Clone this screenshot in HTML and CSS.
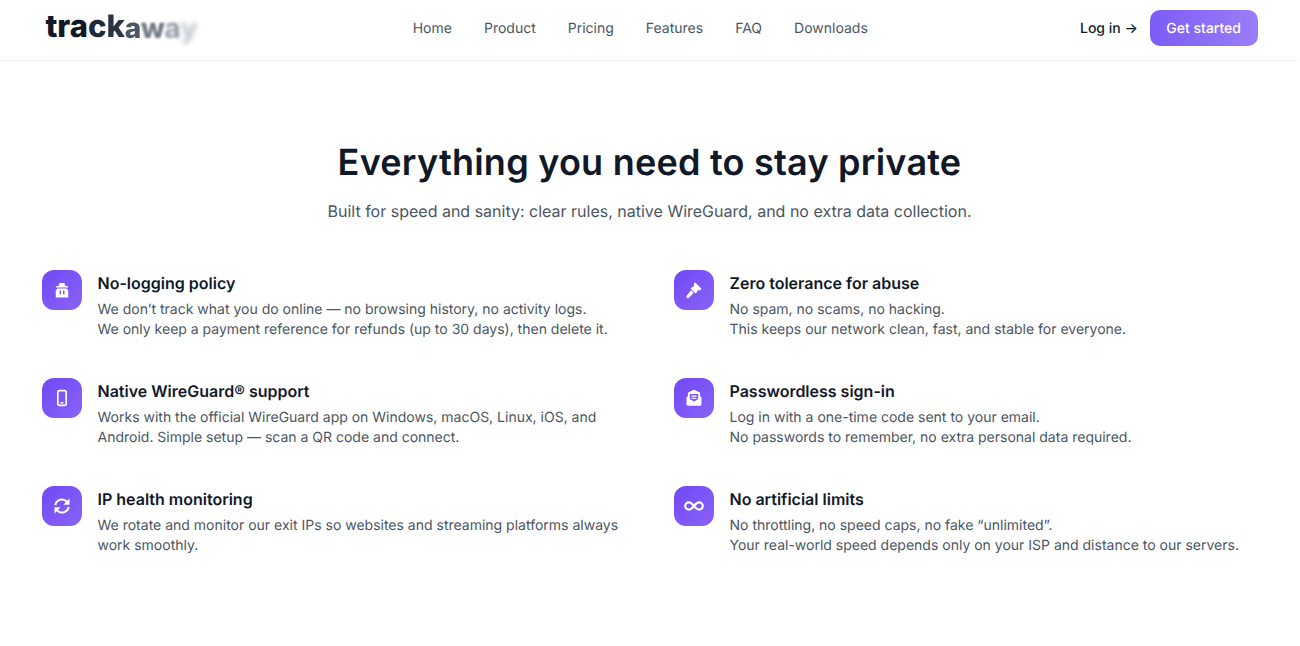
FILE: index.html
```html
<!DOCTYPE html>
<html lang="en">
<head>
<meta charset="utf-8">
<title>trackaway</title>
<link rel="stylesheet" href="styles.css">
</head>
<body>
<header class="site-header">
  <div class="header-inner">
    <a class="logo" href="#"><span class="l0">tra</span><span class="l1">c</span><span class="l2">k</span><span class="l3">a</span><span class="l4">w</span><span class="l5">a</span><span class="l6">y</span></a>
    <nav class="nav">
      <a href="#">Home</a><a href="#">Product</a><a href="#">Pricing</a><a href="#">Features</a><a href="#">FAQ</a><a href="#">Downloads</a>
    </nav>
    <div class="actions">
      <a class="login" href="#">Log in →</a>
      <a class="cta" href="#">Get started</a>
    </div>
  </div>
</header>
<main class="features">
  <h1>Everything you need to stay private</h1>
  <p class="lead">Built for speed and sanity: clear rules, native WireGuard, and no extra data collection.</p>
  <div class="grid">
    <article class="item">
      <span class="icon"><svg viewBox="0 0 24 24" width="20" height="20"><path fill="#fff" fill-rule="evenodd" d="M9 3.500h6l1 3.700h3v1.700H5V7.200h3zM6.500 10.200h11l2 2.300V21h-15v-8.500zM9 12.500v4.500h1.800v-4.500zm4.200 0v4.500H15v-4.500z"/></svg></span>
      <div><h3>No-logging policy</h3><p>We don’t track what you do online — no browsing history, no activity logs.<br>We only keep a payment reference for refunds (up to 30 days), then delete it.</p></div>
    </article>
    <article class="item">
      <span class="icon"><svg viewBox="0 0 24 24" width="20" height="20"><path fill="#fff" d="M13.200 2.800l7.800 7.800-2.200 2.200-1.100-1.100-2.200 2.200.4.400-2 2-6-6 2-2 .4.400 2.200-2.200-1.100-1.100zM8.600 12.400l3 3-5.600 5.800a1.800 1.800 0 0 1-2.600-2.600z"/></svg></span>
      <div><h3>Zero tolerance for abuse</h3><p>No spam, no scams, no hacking.<br>This keeps our network clean, fast, and stable for everyone.</p></div>
    </article>
    <article class="item">
      <span class="icon"><svg viewBox="0 0 24 24" width="20" height="20"><path fill="none" stroke="#fff" stroke-width="2" d="M8.500 3.200h7a1.500 1.500 0 0 1 1.500 1.500v14.600a1.500 1.500 0 0 1-1.500 1.500h-7A1.500 1.500 0 0 1 7 19.300V4.700a1.500 1.500 0 0 1 1.500-1.500z"/><path fill="#fff" d="M10.300 16.800h3.400v1.800h-3.400z"/></svg></span>
      <div><h3>Native WireGuard® support</h3><p>Works with the official WireGuard app on Windows, macOS, Linux, iOS, and<br>Android. Simple setup — scan a QR code and connect.</p></div>
    </article>
    <article class="item">
      <span class="icon"><svg viewBox="0 0 24 24" width="20" height="20"><path fill="#fff" fill-rule="evenodd" d="M12 2.200l6.500 3a1.500 1.500 0 0 1 .8 1.300V10l1.700 1v8.500a1.800 1.800 0 0 1-1.800 1.800H4.800A1.800 1.800 0 0 1 3 19.500V11l1.700-1V6.500a1.500 1.500 0 0 1 .8-1.300zM7 7.200v6.300l5 2.700 5-2.700V7.200zm2 1.800h6v1.500H9zm0 2.600h6V13H9z"/></svg></span>
      <div><h3>Passwordless sign-in</h3><p>Log in with a one-time code sent to your email.<br>No passwords to remember, no extra personal data required.</p></div>
    </article>
    <article class="item">
      <span class="icon"><svg viewBox="0 0 24 24" width="20" height="20" fill="none" stroke="#fff" stroke-width="2.400"><path d="M4 11a8 8 0 0 1 13.800-4.200"/><path fill="#fff" stroke="none" d="M21 3v7.500h-7.500z"/><path d="M20 13a8 8 0 0 1-13.800 4.200"/><path fill="#fff" stroke="none" d="M3 21v-7.500h7.500z"/></svg></span>
      <div><h3>IP health monitoring</h3><p>We rotate and monitor our exit IPs so websites and streaming platforms always<br>work smoothly.</p></div>
    </article>
    <article class="item">
      <span class="icon"><svg viewBox="0 0 24 24" width="24" height="24" fill="none" stroke="#fff" stroke-width="2.200"><path d="M12 12c-1.800-2.400-3.200-3.600-5.200-3.600a3.600 3.600 0 0 0 0 7.200c2 0 3.400-1.200 5.200-3.600s3.200-3.600 5.200-3.600a3.600 3.600 0 0 1 0 7.200c-2 0-3.400-1.200-5.200-3.600z"/></svg></span>
      <div><h3>No artificial limits</h3><p>No throttling, no speed caps, no fake “unlimited”.<br>Your real-world speed depends only on your ISP and distance to our servers.</p></div>
    </article>
  </div>
</main>
</body>
</html>
```

FILE: styles.css
```css
* { box-sizing: border-box; }
html, body { margin: 0; padding: 0; }
body { font-family: Inter, "Liberation Sans", sans-serif; background: #fff; color: #111827; overflow: hidden; height: 646px; padding-right: 1px; text-rendering: geometricPrecision; }
a { text-decoration: none; color: inherit; }

.site-header { height: 61px; border-bottom: 1px solid #f0f1f3; }
.header-inner { width: 1216px; margin: 0 auto; height: 56px; display: flex; justify-content: space-between; align-items: center; }
.logo { width: 159px; padding-left: 4px; font-size: 31px; font-weight: 800; color: #111827; line-height: 1; display: inline-flex; margin-top: -4px; }
.l1 { color: #1f2937; }
.l2 { color: #2b3442; filter: blur(.3px); }
.l3, .l4, .l5, .l6 { font-size: 28px; align-self: flex-end; letter-spacing: -.6px; }
.l3 { color: #4b5563; filter: blur(.7px); }
.l4 { color: #737b88; filter: blur(1.2px); }
.l5 { color: #9ca3af; filter: blur(1.8px); }
.l6 { color: #c4c8d0; filter: blur(2.4px); }
.nav { display: flex; gap: 32px; font-size: 14px; color: #4b5563; }
.actions { display: flex; align-items: center; gap: 12px; font-size: 14px; }
.login { font-weight: 500; color: #111827; }
.cta { height: 36px; padding: 0 16.5px; display: flex; align-items: center; border-radius: 10px; font-weight: 500; color: #fff; background: linear-gradient(90deg, #7c5cf6, #9a7df8); }

.features { width: 1216px; margin: 0 auto; padding-top: 75px; }
h1 { margin: 0; font-size: 36px; line-height: 52px; font-weight: 600; text-align: center; color: #111827; letter-spacing: .23px; }
.lead { margin: 9px 0 0; text-align: center; font-size: 16px; line-height: 28px; color: #4b5563; }
.grid { margin-top: 45px; display: grid; grid-template-columns: 584px 584px; column-gap: 48px; row-gap: 28px; }
.item { display: flex; gap: 16px; align-items: flex-start; height: 80px; }
.icon { flex: none; width: 40px; height: 40px; border-radius: 12px; display: flex; align-items: center; justify-content: center; background: linear-gradient(135deg, #7148f5, #8a63f7); }
h3 { margin: 0 0 4px; font-size: 16px; line-height: 26px; font-weight: 600; color: #111827; }
.item p { margin: 0; font-size: 14px; line-height: 20px; color: #4b5563; }
```
